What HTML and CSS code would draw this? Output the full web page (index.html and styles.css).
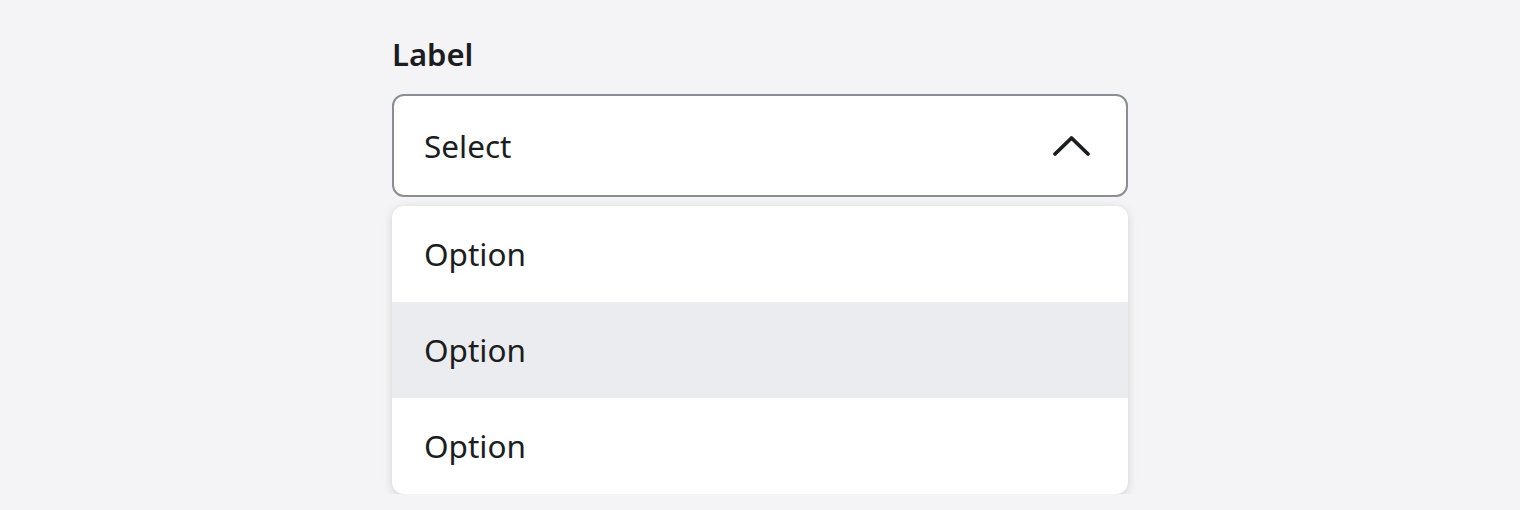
FILE: index.html
```html
<!DOCTYPE html>
<html lang="en">
<head>
  <meta charset="UTF-8" />
  <meta name="viewport" content="width=device-width, initial-scale=1.0"/>
  <title>Select</title>
  <link rel="stylesheet" href="styles.css">
</head>
<body>

  <!-- Select field, open state -->
  <div class="field">
    <label class="field-label" for="select">Label</label>
    <div class="select" id="select">
      <span class="select-value">Select</span>
      <svg class="chevron" width="40" height="22" viewBox="0 0 40 22" aria-hidden="true">
        <polyline points="4,19 20.5,3 37,19" fill="none" stroke="#1c1d21" stroke-width="3.8" stroke-linecap="round" stroke-linejoin="round"/>
      </svg>
    </div>
    <ul class="menu">
      <li class="option">Option</li>
      <li class="option hover">Option</li>
      <li class="option">Option</li>
    </ul>
  </div>

</body>
</html>
```

FILE: styles.css
```css
body {
  margin:0; background:#f4f4f6;
  font-family:"Noto Sans","Open Sans",sans-serif; color:#1c1d21;
}
.field {
  width:736px; margin:0 auto; padding-top:34px;
  display:flex; flex-direction:column;
}
.field-label {
  font-size:31px; line-height:40px; font-weight:600;
  margin-bottom:20px;
}
.select {
  box-sizing:border-box; height:103px;
  border:2px solid #8a8d93; border-radius:12px; background:#fff;
  padding:0 35px 0 30px;
  display:flex; align-items:center; justify-content:space-between;
  font-size:31.5px; line-height:40px;
}
.chevron { display:block; }
.menu {
  list-style:none; margin:9px 0 0; padding:0;
  background:#fff; border-radius:12px; overflow:hidden;
  box-shadow:0 2px 10px rgba(0,0,0,0.14);
}
.option {
  height:96px; padding:0 32px;
  display:flex; align-items:center;
  font-size:31.5px; line-height:40px;
}
.option.hover { background:#ebecf0; }
```
